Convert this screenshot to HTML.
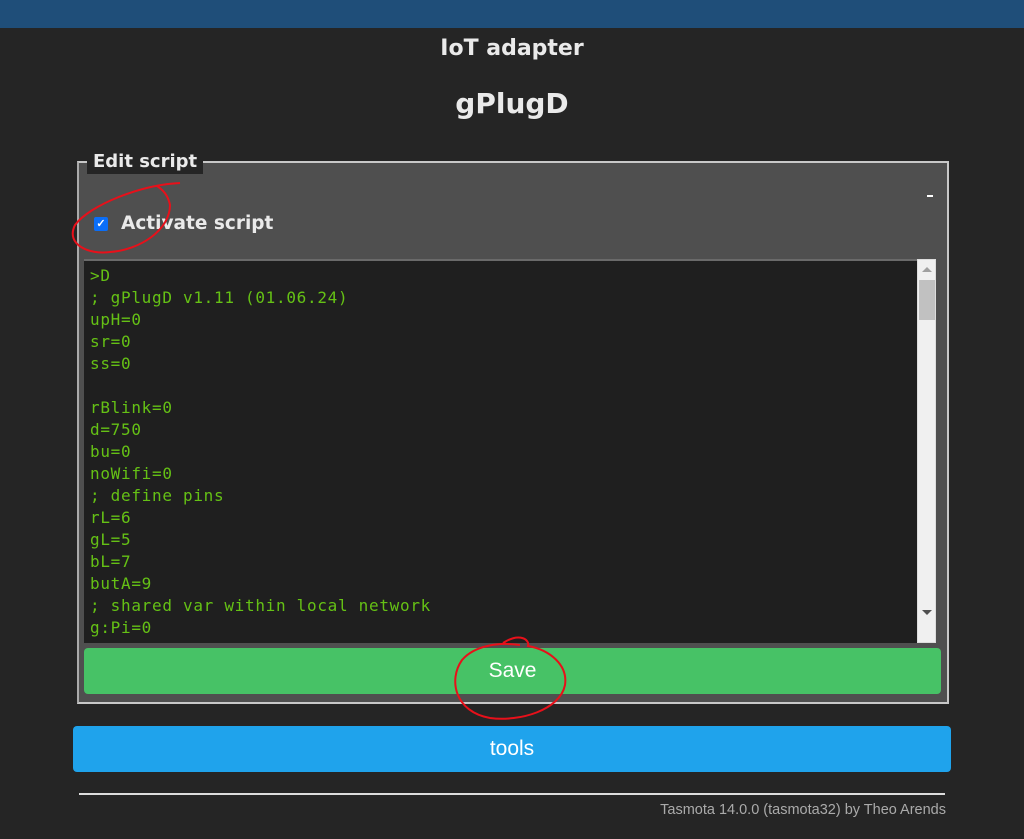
<!DOCTYPE html>
<html><head><meta charset="utf-8"><style>
body{margin:0;background:#252525;width:1024px;height:839px;overflow:hidden;font-family:"Liberation Sans",sans-serif;color:#eaeaea;position:relative}
.top{position:absolute;left:0;top:0;width:1024px;height:28px;background:#1f4e79}
.t1{position:absolute;top:36px;width:1024px;text-align:center;font-weight:bold;font-size:22px;font-family:"DejaVu Sans",sans-serif}
.t2{position:absolute;top:87px;width:1024px;text-align:center;font-weight:bold;font-size:28px;font-family:"DejaVu Sans",sans-serif}
.fs{position:absolute;left:77px;top:161px;width:868px;height:539px;border:2px solid #c8c8c8;border-left-color:#aaa;background:#4f4f4f}
.leg{position:absolute;left:87px;top:150px;background:#252525;padding:0 6px;font-weight:bold;font-size:18px;font-family:"DejaVu Sans",sans-serif;height:24px;line-height:24px}
.ta{position:absolute;left:84px;top:259px;width:852px;height:384px;background:#1f1f1f;border-top:2px solid #6a6a6a;box-sizing:border-box;overflow:hidden;font-family:"DejaVu Sans Mono","Liberation Mono",monospace;font-size:16px;letter-spacing:0.7px;line-height:22px;color:#65c115;padding:4px 6px;white-space:pre}
.sb{position:absolute;left:917px;top:259px;width:19px;height:384px;background:#f0f0f0;border:1px solid #ddd;box-sizing:border-box}
.btn{position:absolute;border-radius:4px;color:#fff;text-align:center;font-size:21px;line-height:46px;height:46px}
</style></head><body>
<div class="top"></div>
<div class="t1">IoT adapter</div>
<div class="t2">gPlugD</div>
<div class="fs"></div>
<div class="leg">Edit script</div>
<div style="position:absolute;left:927px;top:195px;width:6px;height:2px;background:#fff"></div>
<div style="position:absolute;left:94px;top:217px;width:14px;height:14px;background:#0b6ef7;border-radius:2px;color:#fff;font-size:11px;line-height:14px;text-align:center;font-weight:bold">✓</div>
<div style="position:absolute;left:121px;top:213px;font-weight:bold;font-size:18.5px;font-family:'DejaVu Sans',sans-serif">Activate script</div>
<div class="ta">&gt;D
; gPlugD v1.11 (01.06.24)
upH=0
sr=0
ss=0

rBlink=0
d=750
bu=0
noWifi=0
; define pins
rL=6
gL=5
bL=7
butA=9
; shared var within local network
g:Pi=0
g:Po=0</div>
<div class="sb"><div style="position:absolute;left:1px;top:20px;width:16px;height:40px;background:#c1c1c1"></div>
<div style="position:absolute;left:4px;top:7px;border:5px solid transparent;border-bottom-color:#a0a0a0;border-top:0"></div>
<div style="position:absolute;left:4px;top:350px;border:5px solid transparent;border-top-color:#505050;border-bottom:0"></div></div>
<div class="btn" style="left:84px;top:648px;width:857px;background:#47c266">Save</div>
<div class="btn" style="left:73px;top:726px;width:878px;background:#1fa3ec">tools</div>
<div style="position:absolute;left:79px;top:793px;width:866px;height:2px;background:#ddd"></div>
<div style="position:absolute;right:78px;top:802px;font-size:14.5px;color:#aaa">Tasmota 14.0.0 (tasmota32) by Theo Arends</div>
<svg style="position:absolute;left:0;top:0" width="1024" height="839" fill="none" stroke="#e8101a" stroke-width="2">
<path d="M180 183 C140 185 90 205 75 225 C65 245 90 255 110 252 C140 250 170 230 170 205 C168 195 163 190 157 186"/>
<path d="M503 643 C520 632 530 640 528 646 C550 650 568 665 565 685 C560 710 520 722 490 718 C455 712 448 680 462 660 C475 645 500 642 520 645"/>
</svg>
</body></html>
